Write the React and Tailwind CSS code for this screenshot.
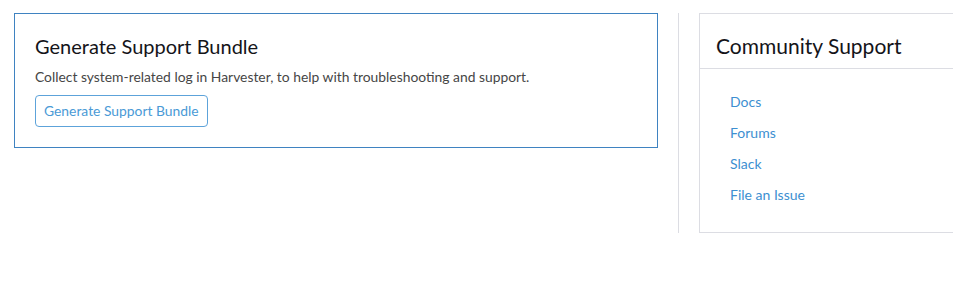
import React from 'react'

const links = ['Docs', 'Forums', 'Slack', 'File an Issue']

const App = () => {
  return (
    <div
      className="w-[953px] h-[286px] overflow-hidden bg-white pt-[13px] pl-[14px]"
      style={{ fontFamily: 'Lato, "Open Sans", sans-serif' }}
    >
      <div className="flex items-start">
        {/* Support bundle card */}
        <div className="w-[644px] shrink-0 border border-[#3f83c1] px-5 pt-5 pb-5">
          <h2 className="text-[20px] leading-[24px] text-[#141419]">Generate Support Bundle</h2>
          <p className="mt-2 text-[13.86px] leading-[21px] text-[#464646]">
            Collect system-related log in Harvester, to help with troubleshooting and support.
          </p>
          <button className="mt-2 h-8 px-2 rounded border border-[#5da3da] text-[13.86px] text-[#4a9ad6] bg-white">
            Generate Support Bundle
          </button>
        </div>

        {/* Divider */}
        <div className="self-stretch w-px shrink-0 mx-5 bg-[#dcdde3]"></div>

        {/* Community support */}
        <div className="w-[300px] shrink-0 border border-[#dcdde3]">
          <div className="px-4 pt-5 pb-[10px] border-b border-[#dcdde3]">
            <h2 className="text-[21px] leading-[24px] text-[#141419]">Community Support</h2>
          </div>
          <ul className="pl-[30px] pt-[22px] pb-[27px] flex flex-col gap-[10px]">
            {links.map((link) => (
              <li key={link} className="text-[14px] leading-[21px]">
                <a href="#" className="text-[#3d8fd1]">
                  {link}
                </a>
              </li>
            ))}
          </ul>
        </div>
      </div>
    </div>
  )
}

export default App
